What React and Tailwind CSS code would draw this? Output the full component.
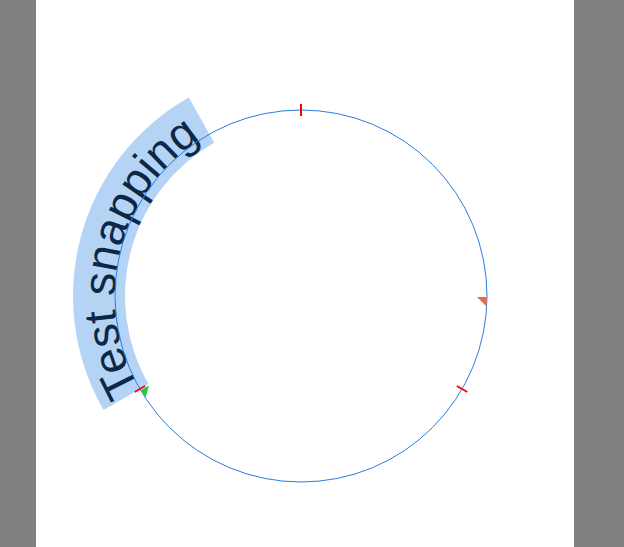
const CX = 301;
const CY = 296;
const R = 186;

// point on the circle at angle (degrees, screen coords)
const pt = (deg, r = R) => {
  const a = (deg * Math.PI) / 180;
  return [CX + r * Math.cos(a), CY + r * Math.sin(a)];
};

const sector = (from, to, rIn, rOut) => {
  const [ox1, oy1] = pt(from, rOut);
  const [ox2, oy2] = pt(to, rOut);
  const [ix2, iy2] = pt(to, rIn);
  const [ix1, iy1] = pt(from, rIn);
  return `M${ox1},${oy1} A${rOut},${rOut} 0 0 1 ${ox2},${oy2} L${ix2},${iy2} A${rIn},${rIn} 0 0 0 ${ix1},${iy1} Z`;
};

const Tick = ({ deg }) => {
  const [x1, y1] = pt(deg, R - 6);
  const [x2, y2] = pt(deg, R + 6);
  return <line x1={x1} y1={y1} x2={x2} y2={y2} stroke="#ff0000" strokeWidth="2" />;
};

const textStart = pt(150);
const textEnd = pt(255);

export default function App() {
  return (
    <div className="w-[624px] h-[547px] bg-[#808080] flex">
      <div className="ml-[36px] w-[538px] h-full bg-white">
        <svg width="538" height="547" viewBox="36 0 538 547">
          <defs>
            <path
              id="arc"
              d={`M${textStart[0]},${textStart[1]} A${R},${R} 0 0 1 ${textEnd[0]},${textEnd[1]}`}
            />
          </defs>
          <path d={sector(150, 240.5, 176, 228)} fill="#b5d3f5" />
          <text
            fontFamily="'Liberation Sans', Arial, sans-serif"
            fontSize="46"
            fill="#0c2847"
          >
            <textPath href="#arc">Test snapping</textPath>
          </text>
          <circle cx={CX} cy={CY} r={R} fill="none" stroke="#2a7de1" strokeWidth="1" />
          <Tick deg={-90} />
          <Tick deg={30} />
          <Tick deg={150} />
          <polygon points="486.5,297 477,297 486.5,306.5" fill="#ee6a43" />
          <polygon points="141,390 149,385.5 145.5,397.8" fill="#22c94a" />
        </svg>
      </div>
    </div>
  );
}
